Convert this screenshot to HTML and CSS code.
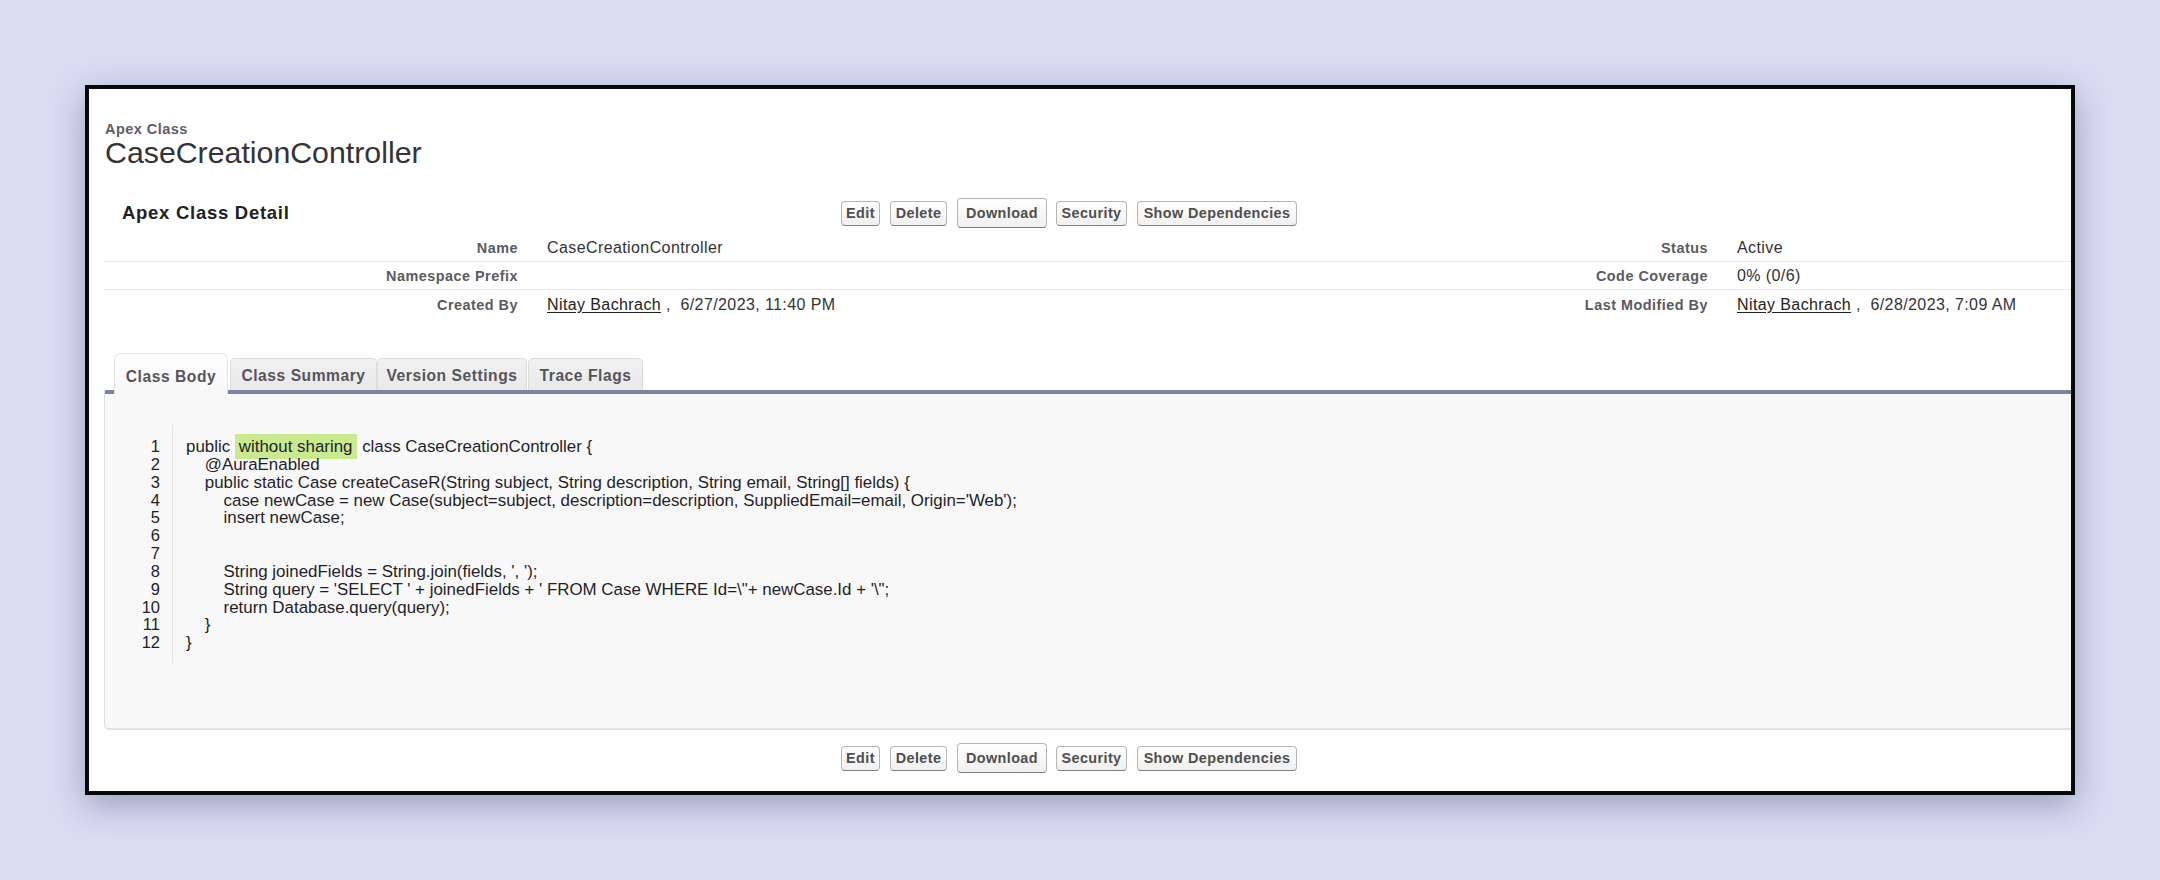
FILE: index.html
```html
<!DOCTYPE html>
<html lang="en">
<head>
<meta charset="utf-8">
<title>CaseCreationController</title>
<link rel="stylesheet" href="styles.css">
</head>
<body>
<main class="frame">
  <header class="page-head">
    <div class="page-type">Apex Class</div>
    <h1 class="page-title">CaseCreationController</h1>
  </header>

  <section class="detail">
    <div class="detail-head">
      <h2 class="detail-title">Apex Class Detail</h2>
      <div class="btn-row">
        <button class="btn w-edit">Edit</button>
        <button class="btn w-delete">Delete</button>
        <button class="btn btn-big w-download">Download</button>
        <button class="btn w-security">Security</button>
        <button class="btn w-deps">Show Dependencies</button>
      </div>
    </div>
    <div class="row">
      <div class="lbl">Name</div><div class="val val-left">CaseCreationController</div>
      <div class="lbl lbl-right">Status</div><div class="val">Active</div>
    </div>
    <div class="row">
      <div class="lbl">Namespace Prefix</div><div class="val val-left"></div>
      <div class="lbl lbl-right">Code Coverage</div><div class="val">0% (0/6)</div>
    </div>
    <div class="row row-last">
      <div class="lbl">Created By</div><div class="val val-left"><a class="user">Nitay Bachrach</a> ,&nbsp; 6/27/2023, 11:40 PM</div>
      <div class="lbl lbl-right">Last Modified By</div><div class="val"><a class="user">Nitay Bachrach</a> ,&nbsp; 6/28/2023, 7:09 AM</div>
    </div>
  </section>

  <nav class="tabs">
    <div class="tab tab-on">Class Body</div>
    <div class="tab t-summary">Class Summary</div>
    <div class="tab t-version">Version Settings</div>
    <div class="tab t-trace">Trace Flags</div>
  </nav>

  <section class="panel">
    <div class="code">
      <div class="nums"><div>1</div><div>2</div><div>3</div><div>4</div><div>5</div><div>6</div><div>7</div><div>8</div><div>9</div><div>10</div><div>11</div><div>12</div></div>
      <pre class="src"><div>public <mark class="hl">without sharing</mark> class CaseCreationController {</div><div>    @AuraEnabled</div><div>    public static Case createCaseR(String subject, String description, String email, String[] fields) {</div><div>        case newCase = new Case(subject=subject, description=description, SuppliedEmail=email, Origin='Web');</div><div>        insert newCase;</div><div>&nbsp;</div><div>&nbsp;</div><div>        String joinedFields = String.join(fields, ', ');</div><div>        String query = 'SELECT ' + joinedFields + ' FROM Case WHERE Id=\"+ newCase.Id + '\";</div><div>        return Database.query(query);</div><div>    }</div><div>}</div></pre>
    </div>
  </section>

  <div class="btn-row btn-row-bottom">
    <button class="btn w-edit">Edit</button>
    <button class="btn w-delete">Delete</button>
    <button class="btn btn-big w-download">Download</button>
    <button class="btn w-security">Security</button>
    <button class="btn w-deps">Show Dependencies</button>
  </div>
</main>
</body>
</html>
```

FILE: styles.css
```css
* { box-sizing: border-box; }
html, body { margin: 0; height: 880px; overflow: hidden; }
body {
  background: #d9ddf2;
  padding: 85px;
  font-family: "Liberation Sans", Arial, sans-serif;
  color: #2a2a2e;
}
.frame {
  width: 1990px;
  height: 710px;
  background: #fff;
  border: 4px solid #07080c;
  box-shadow: 0 10px 32px rgba(60, 66, 110, 0.4);
  display: flex;
  flex-direction: column;
  overflow: hidden;
  padding-left: 15px;
}
.page-head { padding: 32px 0 0 1px; height: 103px; flex: none; }
.page-type { font-size: 14.5px; font-weight: 700; letter-spacing: .45px; color: #5c5d66; line-height: 16px; }
.page-title { margin: 0; font-size: 30.3px; font-weight: 400; color: #333338; line-height: 32px; }
.detail-head { height: 42px; display: flex; align-items: center; }
.detail-title { margin: 0 0 0 18px; width: 719px; flex: none; font-size: 18.5px; font-weight: 700; letter-spacing: .72px; color: #222; }
.btn-row { display: flex; align-items: center; gap: 10px; }
.btn {
  height: 25px;
  padding: 0;
  border: 1px solid #b5b5b5;
  border-bottom-color: #7f7f7f;
  border-radius: 4px;
  background: linear-gradient(#fff, #f0f0f0);
  font-family: "Liberation Sans", Arial, sans-serif;
  font-size: 14.4px;
  font-weight: 700;
  letter-spacing: .4px;
  color: #4f4f4f;
}
.btn-big { height: 30px; }
.w-edit { width: 39px; }
.w-delete { width: 57px; }
.w-download { width: 90px; margin-right: -1px; }
.w-security { width: 71px; }
.w-deps { width: 160px; }
.row {
  height: 28px;
  padding-top: 1px;
  display: flex;
  align-items: center;
  border-bottom: 1px solid #e8e8e8;
}
.row-last { border-bottom: 0; }
.lbl { flex: none; width: 414px; text-align: right; font-size: 14.4px; font-weight: 700; letter-spacing: .5px; color: #5a5a62; }
.lbl-right { width: 431px; }
.val { flex: none; padding-left: 29px; font-size: 16px; color: #333; letter-spacing: .4px; }
.val-left { width: 759px; }
.user { color: #222; text-decoration: underline; text-underline-offset: 2px; }
.tabs { display: flex; align-items: flex-end; height: 72px; flex: none; padding-left: 10px; }
.tab {
  height: 32px;
  flex: none;
  background: linear-gradient(#f1f1f1, #e9e9e9);
  border: 1px solid #dcdcdc;
  border-bottom: 0;
  border-radius: 5px 5px 0 0;
  font-size: 15.6px;
  font-weight: 700;
  letter-spacing: .55px;
  color: #55555d;
  text-align: center;
  line-height: 34px;
}
.t-summary { width: 147px; margin-left: 2px; }
.t-version { width: 150px; }
.t-trace { width: 115px; margin-left: 1px; }
.tab-on {
  width: 114px;
  height: 41px;
  margin-bottom: -4px;
  background: linear-gradient(#fff, #f8f8f8);
  border-color: #e2e2e2;
  line-height: 46px;
  position: relative;
  z-index: 1;
  border-radius: 7px 7px 0 0;
}
.panel {
  height: 340px;
  flex: none;
  background: #f8f8f8;
  border-top: 4px solid #7a85a3;
  border-left: 1px solid #dde0e4;
  border-bottom: 2px solid #dfe3e8;
  border-radius: 3px 0 0 5px;
}
.code { display: flex; padding-top: 31px; }
.nums {
  width: 68px;
  height: 238px;
  padding: 13px 12px 0 0;
  border-right: 1px solid #e6e6e6;
  text-align: right;
  font-size: 16.5px;
  line-height: 17.85px;
  color: #222;
}
.src {
  margin: 13px 0 0 13px;
  font-family: "Liberation Sans", Arial, sans-serif;
  font-size: 16.9px;
  line-height: 17.85px;
  color: #1f1f2a;
}
.hl { background: #c9ea8e; color: inherit; padding: 3px 5px 3px 4px; }
.btn-row-bottom { height: 56px; margin-left: 737px; flex: none; }
```
